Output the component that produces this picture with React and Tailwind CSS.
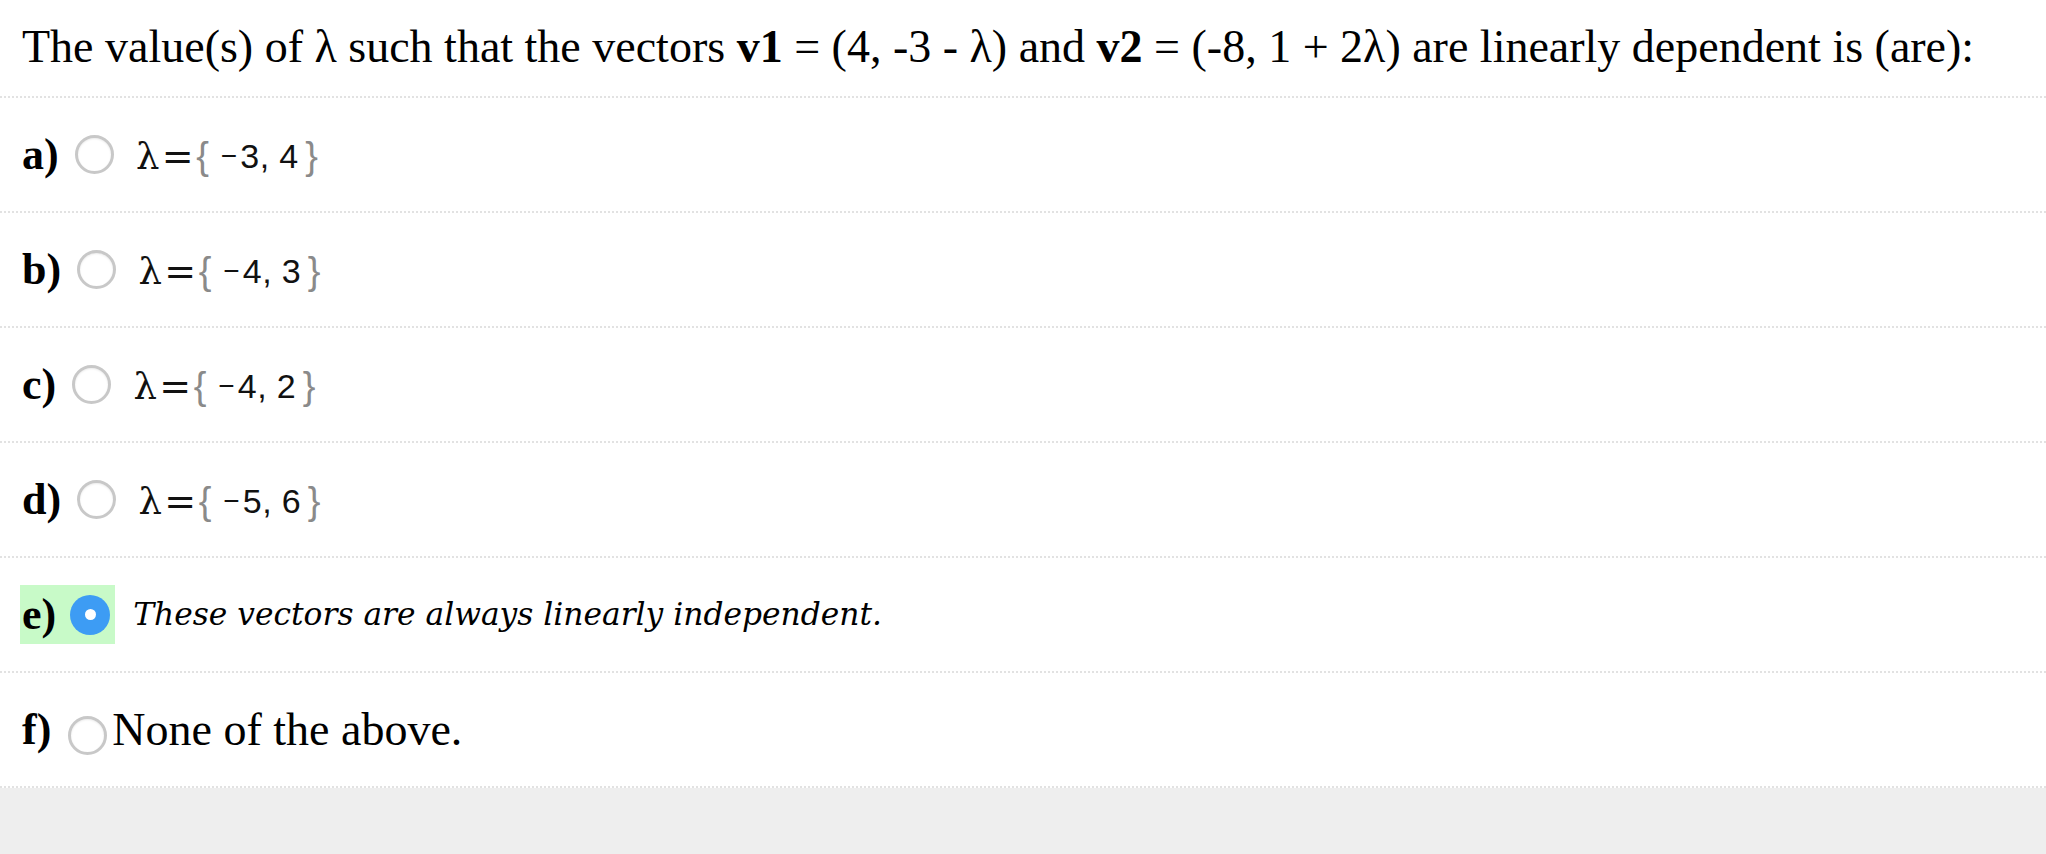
import React from "react";

const serif = { fontFamily: '"Liberation Serif", "Times New Roman", serif' };
const sans = { fontFamily: '"Liberation Sans", "DejaVu Sans", sans-serif' };

function Radio({ checked }) {
  if (checked) {
    return (
      <span className="flex h-[40px] w-[40px] shrink-0 items-center justify-center rounded-full bg-[#3d9cf4]">
        <span className="h-[11px] w-[11px] rounded-full bg-white" />
      </span>
    );
  }
  return (
    <span className="block h-[39px] w-[39px] shrink-0 rounded-full border-[3px] border-[#c8c8c8] bg-white shadow-[inset_0_1px_2px_rgba(0,0,0,0.08)]" />
  );
}

// glyph cells sized to match the rendered math in the screenshot
function MathSet({ a, b }) {
  return (
    <div className="flex items-center leading-none text-[#111]" style={sans}>
      <span className="w-[28px] text-center text-[37px]" style={{ fontFamily: '"DejaVu Serif", serif' }}>
        λ
      </span>
      <span className="w-[28px] text-center text-[38px]" style={{ fontFamily: '"DejaVu Sans", sans-serif' }}>
        =
      </span>
      <span className="ml-[5px] w-[16px] text-center text-[38px] text-[#8a8a8a]">{"{"}</span>
      <span className="ml-[10px] w-[16px] text-center text-[28px]">−</span>
      <span className="ml-[3px] w-[20px] text-center text-[34px]">{a}</span>
      <span className="w-[8px] text-center text-[34px]">,</span>
      <span className="ml-[11px] w-[20px] text-center text-[34px]">{b}</span>
      <span className="ml-[5px] w-[16px] text-center text-[38px] text-[#8a8a8a]">{"}"}</span>
    </div>
  );
}

const options = [
  { key: "a", a: "3", b: "4" },
  { key: "b", a: "4", b: "3" },
  { key: "c", a: "4", b: "2" },
  { key: "d", a: "5", b: "6" },
];

export default function App() {
  return (
    <div className="min-h-screen bg-[#eeeeee]">
      <div className="bg-white" style={serif}>
        <div className="flex h-[98px] items-center border-b-2 border-dotted border-[#e2e2e2] pl-[22px] text-[46px] text-black">
          <p className="pb-[4px]">
            The value(s) of λ such that the vectors <b>v1</b> = (4, -3 - λ) and <b>v2</b> = (-8, 1 + 2λ) are linearly dependent is (are):
          </p>
        </div>

        {options.map((o) => (
          <div
            key={o.key}
            className="flex h-[115px] items-center border-b-2 border-dotted border-[#e2e2e2] pl-[20px]"
          >
            <div className="flex h-[59px] items-center gap-[16px] pl-[2px] pr-[5px]">
              <span className="text-[44px] font-bold leading-none">{o.key})</span>
              <Radio />
            </div>
            <div className="ml-[15px] pt-[3px]">
              <MathSet a={o.a} b={o.b} />
            </div>
          </div>
        ))}

        <div className="flex h-[115px] items-center border-b-2 border-dotted border-[#e2e2e2] pl-[20px]">
          <div className="flex h-[59px] items-center gap-[14px] bg-[#c8fac8] pl-[2px] pr-[5px]">
            <span className="text-[44px] font-bold leading-none">e)</span>
            <Radio checked />
          </div>
          <span
            className="ml-[18px] text-[31.3px] italic text-black"
            style={{ fontFamily: '"DejaVu Serif", serif' }}
          >
            These vectors are always linearly independent.
          </span>
        </div>

        <div className="flex h-[115px] items-center border-b-2 border-dotted border-[#e2e2e2] pl-[20px]">
          <div className="flex items-center gap-[17px] pl-[2px] pr-[5px]">
            <span className="text-[44px] font-bold leading-none">f)</span>
            <span className="translate-y-[6px]">
              <Radio />
            </span>
          </div>
          <span className="text-[46px] leading-none text-black">None of the above.</span>
        </div>
      </div>
    </div>
  );
}
